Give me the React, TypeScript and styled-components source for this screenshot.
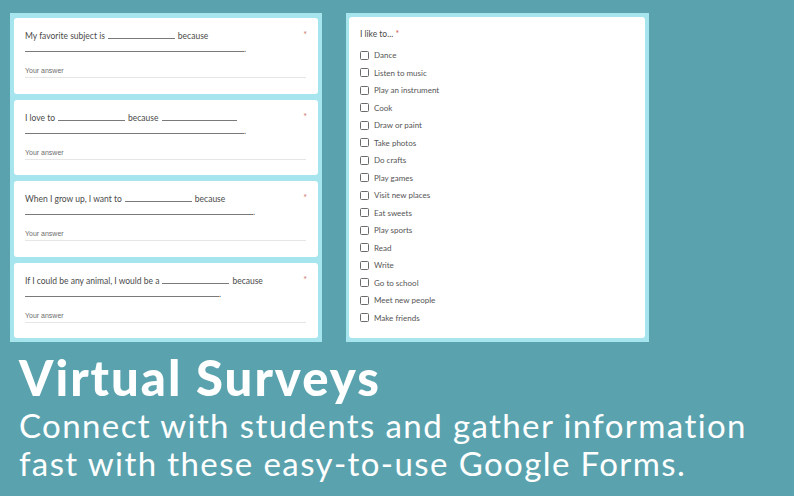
import React from "react";
import styled, { createGlobalStyle } from "styled-components";

const GlobalStyle = createGlobalStyle`
  html, body {
    margin: 0;
    padding: 0;
  }
  body {
    width: 794px;
    height: 496px;
    overflow: hidden;
    background: #5aa3ae;
    font-family: "Lato", "Noto Sans", sans-serif;
  }
`;

type Part = { text?: string; blank?: number; end?: number };

type Question = {
  parts: Part[];
};

const questions: Question[] = [
  {
    parts: [
      { text: "My favorite subject is" },
      { blank: 67 },
      { text: "because" },
      { end: 219 },
    ],
  },
  {
    parts: [
      { text: "I love to" },
      { blank: 67 },
      { text: "because" },
      { blank: 75 },
      { end: 219 },
    ],
  },
  {
    parts: [
      { text: "When I grow up, I want to" },
      { blank: 67 },
      { text: "because" },
      { end: 228 },
    ],
  },
  {
    parts: [
      { text: "If I could be any animal, I would be a" },
      { blank: 67 },
      { text: "because" },
      { end: 194 },
    ],
  },
];

const options = [
  "Dance",
  "Listen to music",
  "Play an instrument",
  "Cook",
  "Draw or paint",
  "Take photos",
  "Do crafts",
  "Play games",
  "Visit new places",
  "Eat sweets",
  "Play sports",
  "Read",
  "Write",
  "Go to school",
  "Meet new people",
  "Make friends",
];

const App: React.FC = () => {
  return (
    <>
      <GlobalStyle />
      <Page>
        <Panels>
          <LeftPanel>
            {questions.map((q, i) => (
              <QuestionCard key={i}>
                <QuestionHead>
                  <QuestionText>
                    {q.parts.map((p, j) =>
                      p.text ? (
                        <span key={j}>{p.text}</span>
                      ) : p.blank ? (
                        <BlankLine key={j} style={{ width: p.blank }} />
                      ) : (
                        <EndLine key={j}>
                          <BlankLine style={{ width: p.end }} />.
                        </EndLine>
                      )
                    )}
                  </QuestionText>
                  <Required>*</Required>
                </QuestionHead>
                <Answer>Your answer</Answer>
              </QuestionCard>
            ))}
          </LeftPanel>
          <RightPanel>
            <ListCard>
              <ListTitle>
                I like to... <Star>*</Star>
              </ListTitle>
              <OptionList>
                {options.map((o) => (
                  <Option key={o}>
                    <Box />
                    <span>{o}</span>
                  </Option>
                ))}
              </OptionList>
            </ListCard>
          </RightPanel>
        </Panels>
        <Title>Virtual Surveys</Title>
        <Subtitle>
          Connect with students and gather information
          <br />
          fast with these easy-to-use Google Forms.
        </Subtitle>
      </Page>
    </>
  );
};

export default App;

const Page = styled.div`
  padding: 13px 0 0 10px;
  display: flex;
  flex-direction: column;
`;

const Panels = styled.div`
  display: flex;
  gap: 24px;
`;

const LeftPanel = styled.div`
  width: 312px;
  height: 329px;
  box-sizing: border-box;
  padding: 5px 4px 4px 4px;
  background: #a7e5ee;
  display: flex;
  flex-direction: column;
  gap: 6px;
`;

const QuestionCard = styled.div`
  flex: 1;
  background: #ffffff;
  border-radius: 3px;
  padding: 12px 12px 0 11px;
  box-sizing: border-box;
  display: flex;
  flex-direction: column;
`;

const QuestionHead = styled.div`
  display: flex;
  justify-content: space-between;
`;

const QuestionText = styled.div`
  font-size: 8.5px;
  line-height: 13px;
  color: #4a4a4a;
  width: 250px;
  span {
    margin-right: 3px;
  }
`;

const BlankLine = styled.i`
  display: inline-block;
  height: 8px;
  border-bottom: 1px solid #7a7a7a;
  margin-right: 3px;
  vertical-align: baseline;
`;

const EndLine = styled.div`
  display: block;
  ${BlankLine} {
    margin-right: 0;
  }
`;

const Required = styled.span`
  color: #d0766e;
  font-size: 9px;
  margin-top: -1px;
  margin-right: -1px;
`;

const Answer = styled.div`
  margin-top: 11px;
  font-family: "Liberation Sans", Arial, sans-serif;
  font-size: 7px;
  color: #6e6e6e;
  padding-bottom: 3px;
  border-bottom: 1px solid #e6e6e6;
`;

const RightPanel = styled.div`
  width: 303px;
  height: 329px;
  box-sizing: border-box;
  padding: 4px 4px 4px 3px;
  background: #a7e5ee;
  display: flex;
`;

const ListCard = styled.div`
  flex: 1;
  background: #ffffff;
  border-radius: 3px;
  padding: 11px 11px 0 11px;
`;

const ListTitle = styled.div`
  font-size: 8.5px;
  color: #4a4a4a;
  line-height: 12px;
`;

const Star = styled.span`
  color: #d0564c;
`;

const OptionList = styled.div`
  margin-top: 10px;
  display: flex;
  flex-direction: column;
  gap: 7.5px;
`;

const Option = styled.div`
  display: flex;
  align-items: center;
  gap: 5px;
  height: 10px;
  font-size: 8px;
  color: #555555;
`;

const Box = styled.span`
  width: 7px;
  height: 7px;
  border: 1.5px solid #6a6a6a;
  border-radius: 1.5px;
  flex: none;
`;

const Title = styled.h1`
  margin: 8px 0 0 9px;
  font-size: 49px;
  line-height: 54px;
  font-weight: 900;
  color: #ffffff;
  letter-spacing: 2px;
`;

const Subtitle = styled.p`
  margin: 2px 0 0 9px;
  font-size: 33px;
  line-height: 38px;
  color: #ffffff;
  letter-spacing: 1.4px;
`;
